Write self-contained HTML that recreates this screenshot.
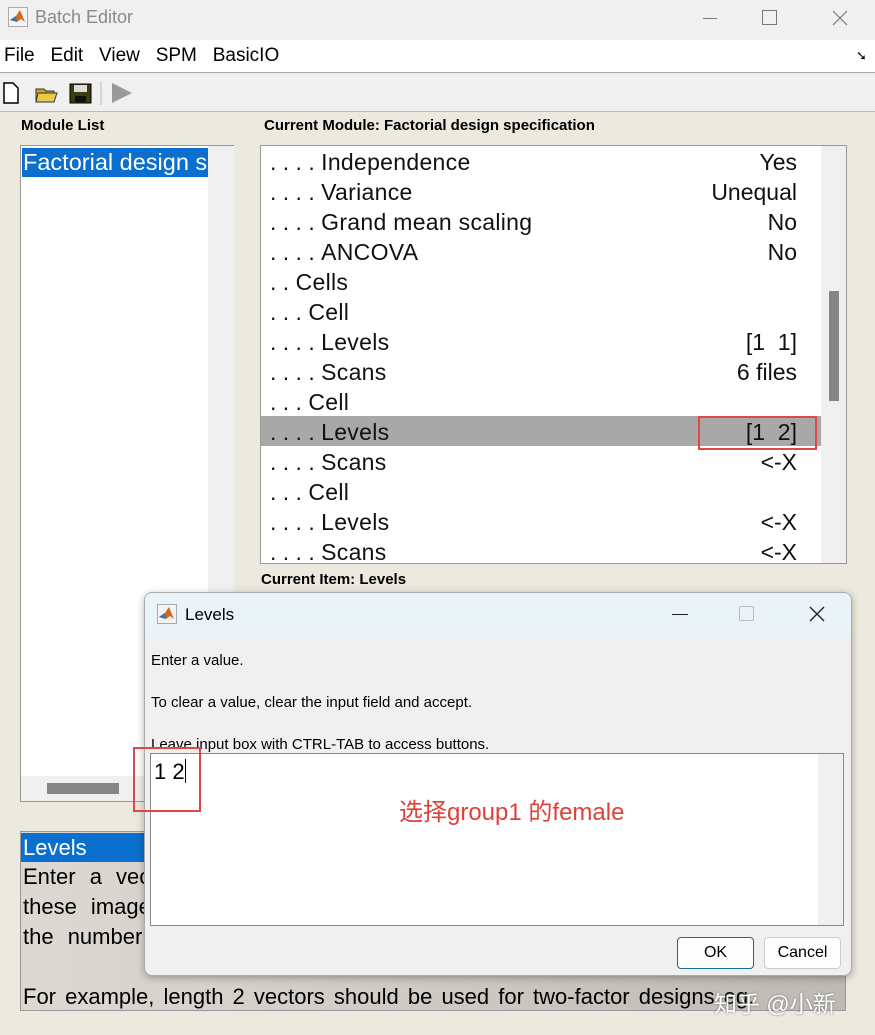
<!DOCTYPE html><html><head><meta charset="utf-8"><style>
*{margin:0;padding:0;box-sizing:border-box}
body{width:875px;height:1035px;background:#ece9df;font-family:"Liberation Sans","Noto Sans CJK SC",sans-serif;position:relative;overflow:hidden}
.a{position:absolute}
.row{position:absolute;left:0;width:560px;height:30px;font-size:23px;line-height:30px;padding-left:9px;color:#111}
.row b{font-weight:normal;letter-spacing:0.3px}
.row span{position:absolute;right:24px}
</style></head><body>
<div class="a" style="left:0;top:0;width:875px;height:40px;background:#f0f0f0"></div>
<svg class="a" style="left:8px;top:7px" width="20" height="20"><rect x="0.5" y="0.5" width="19" height="19" fill="#f4f4f4" stroke="#aaa"/><path d="M2 13 L8 9 L12 3 L17 15 L13 12 L9 15Z" fill="#d2691e"/><path d="M2 13 L8 9 L9 15Z" fill="#3b6fb6"/></svg>
<div class="a" style="left:35px;top:7px;font-size:18px;color:#8a8a8a">Batch Editor</div>
<div class="a" style="left:703px;top:18px;width:14px;height:1px;background:#777"></div>
<div class="a" style="left:762px;top:10px;width:15px;height:15px;border:1px solid #777"></div>
<svg class="a" style="left:832px;top:10px" width="16" height="16"><path d="M1 1L15 15M15 1L1 15" stroke="#777" stroke-width="1.2"/></svg>
<div class="a" style="left:0;top:40px;width:875px;height:33px;background:#fff;border-bottom:1px solid #aaa"></div>
<div class="a" style="left:4px;top:45px;font-size:19px">File&nbsp;&nbsp; Edit&nbsp;&nbsp; View&nbsp;&nbsp; SPM&nbsp;&nbsp; BasicIO</div>
<div class="a" style="left:856px;top:48px;font-size:13px">➘</div>
<div class="a" style="left:0;top:74px;width:875px;height:38px;background:#f0f0f0;border-bottom:1px solid #bbb"></div>
<svg class="a" style="left:2px;top:81px" width="135" height="24"><path d="M2 2 h9 l5 5 v15 h-14z" fill="#fff" stroke="#000" stroke-width="1.5"/><path d="M34 8 h8 l2 2 h8 v10 h-18z" fill="#c9a62a" stroke="#333"/><path d="M36 12 h19 l-3 9 h-18z" fill="#e8c948" stroke="#333"/><rect x="68" y="3" width="21" height="19" fill="#3c3c10" stroke="#000"/><rect x="72" y="4" width="13" height="7" fill="#ddd"/><rect x="73" y="15" width="11" height="6" fill="#111"/><line x1="99" y1="0" x2="99" y2="24" stroke="#bbb"/><path d="M110 2 L130 12 L110 22z" fill="#999"/></svg>
<div class="a" style="left:21px;top:117px;font-size:15px;font-weight:bold">Module List</div>
<div class="a" style="left:264px;top:117px;font-size:15px;font-weight:bold">Current Module: Factorial design specification</div>
<div class="a" style="left:20px;top:145px;width:214px;height:657px;background:#fff;border:1px solid #999">
<div class="a" style="left:1px;top:2px;width:186px;height:29px;background:#0a6fce;color:#fff;font-size:23.5px;line-height:29px;padding-left:1px;overflow:hidden;white-space:nowrap">Factorial design s</div>
<div class="a" style="left:187px;top:0;width:26px;height:630px;background:#f0f0f0"></div>
<div class="a" style="left:0;top:630px;width:213px;height:25px;background:#f0f0f0"></div>
<div class="a" style="left:26px;top:637px;width:72px;height:11px;background:#858585"></div>
</div>
<div class="a" style="left:260px;top:145px;width:587px;height:419px;background:#fff;border:1px solid #999;overflow:hidden">
<div class="a" style="left:560px;top:0;width:26px;height:419px;background:#f0f0f0"></div>
<div class="a" style="left:568px;top:145px;width:10px;height:110px;background:#858585"></div>
<div class="a" style="left:0;top:270px;width:560px;height:30px;background:#a8a8a8"></div>
<div class="row" style="top:1px">. . . . <b>Independence</b><span>Yes</span></div>
<div class="row" style="top:31px">. . . . <b>Variance</b><span>Unequal</span></div>
<div class="row" style="top:61px">. . . . <b>Grand mean scaling</b><span>No</span></div>
<div class="row" style="top:91px">. . . . <b>ANCOVA</b><span>No</span></div>
<div class="row" style="top:121px">. . <b>Cells</b></div>
<div class="row" style="top:151px">. . . <b>Cell</b></div>
<div class="row" style="top:181px">. . . . <b>Levels</b><span>[1 &nbsp;1]</span></div>
<div class="row" style="top:211px">. . . . <b>Scans</b><span>6 files</span></div>
<div class="row" style="top:241px">. . . <b>Cell</b></div>
<div class="row" style="top:271px">. . . . <b>Levels</b><span>[1 &nbsp;2]</span></div>
<div class="row" style="top:301px">. . . . <b>Scans</b><span>&lt;-X</span></div>
<div class="row" style="top:331px">. . . <b>Cell</b></div>
<div class="row" style="top:361px">. . . . <b>Levels</b><span>&lt;-X</span></div>
<div class="row" style="top:391px">. . . . <b>Scans</b><span>&lt;-X</span></div>
<div class="a" style="left:437px;top:270px;width:119px;height:34px;border:2px solid #e04848"></div>
</div>
<div class="a" style="left:261px;top:571px;font-size:15px;font-weight:bold">Current Item: Levels</div>
<div class="a" style="left:20px;top:831px;width:826px;height:180px;background:linear-gradient(90deg,#dcd9d3,#cdcac4 50%,#bdbab4);border:1px solid #999;font-size:22px;line-height:30px;overflow:hidden">
<div style="background:#0a6fce;color:#fff;height:29px;margin-top:1px;padding-left:2px">Levels</div>
<div style="padding-left:2px;word-spacing:8px">Enter a vector of ...<br>these images ...<br>the number ...<br><br><span style="word-spacing:3px">For example, length 2 vectors should be used for two-factor designs eg.</span></div>
</div>
<div class="a" style="left:144px;top:592px;width:708px;height:384px;background:#f0f0f0;border:1px solid #aaa;border-radius:8px;box-shadow:0 2px 8px rgba(0,0,0,.3);overflow:hidden">
<div class="a" style="left:0;top:0;width:708px;height:44px;background:#eaf3f8"></div>
<svg class="a" style="left:12px;top:11px" width="20" height="20"><rect x="0.5" y="0.5" width="19" height="19" fill="#f4f4f4" stroke="#aaa"/><path d="M2 13 L8 9 L12 3 L17 15 L13 12 L9 15Z" fill="#d2691e"/><path d="M2 13 L8 9 L9 15Z" fill="#3b6fb6"/></svg>
<div class="a" style="left:40px;top:12px;font-size:17px">Levels</div>
<div class="a" style="left:527px;top:21px;width:16px;height:1px;background:#222"></div>
<div class="a" style="left:594px;top:13px;width:15px;height:15px;border:1px solid #bbb;border-radius:2px"></div>
<svg class="a" style="left:664px;top:13px" width="16" height="16"><path d="M1 1L15 15M15 1L1 15" stroke="#222" stroke-width="1.4"/></svg>
<div class="a" style="left:6px;top:59px;font-size:15px">Enter a value.</div>
<div class="a" style="left:6px;top:101px;font-size:15px">To clear a value, clear the input field and accept.</div>
<div class="a" style="left:6px;top:143px;font-size:15px">Leave input box with CTRL-TAB to access buttons.</div>
<div class="a" style="left:5px;top:160px;width:694px;height:173px;background:#fff;border:1px solid #888">
<div class="a" style="right:0;top:0;width:25px;height:171px;background:#f0f0f0"></div>
<div class="a" style="left:3px;top:5px;font-size:22px">1 2<span style="display:inline-block;width:1px;height:24px;background:#000;vertical-align:-4px"></span></div>
<div class="a" style="left:248px;top:38px;font-size:24px;color:#e0403a">选择group1 的female</div>
</div>
<div class="a" style="left:532px;top:344px;width:77px;height:32px;background:#fdfdfd;border:1px solid #1a6a9a;border-radius:4px;font-size:16px;text-align:center;line-height:30px">OK</div>
<div class="a" style="left:619px;top:344px;width:77px;height:32px;background:#fdfdfd;border:1px solid #ccc;border-radius:4px;font-size:16px;text-align:center;line-height:30px">Cancel</div>
</div>
<div class="a" style="left:133px;top:747px;width:68px;height:65px;border:2px solid #e04848"></div>
<div class="a" style="left:714px;top:985px;font-size:23px;color:#fff;text-shadow:0 0 2px #666">知乎 @小新</div>
</body></html>
